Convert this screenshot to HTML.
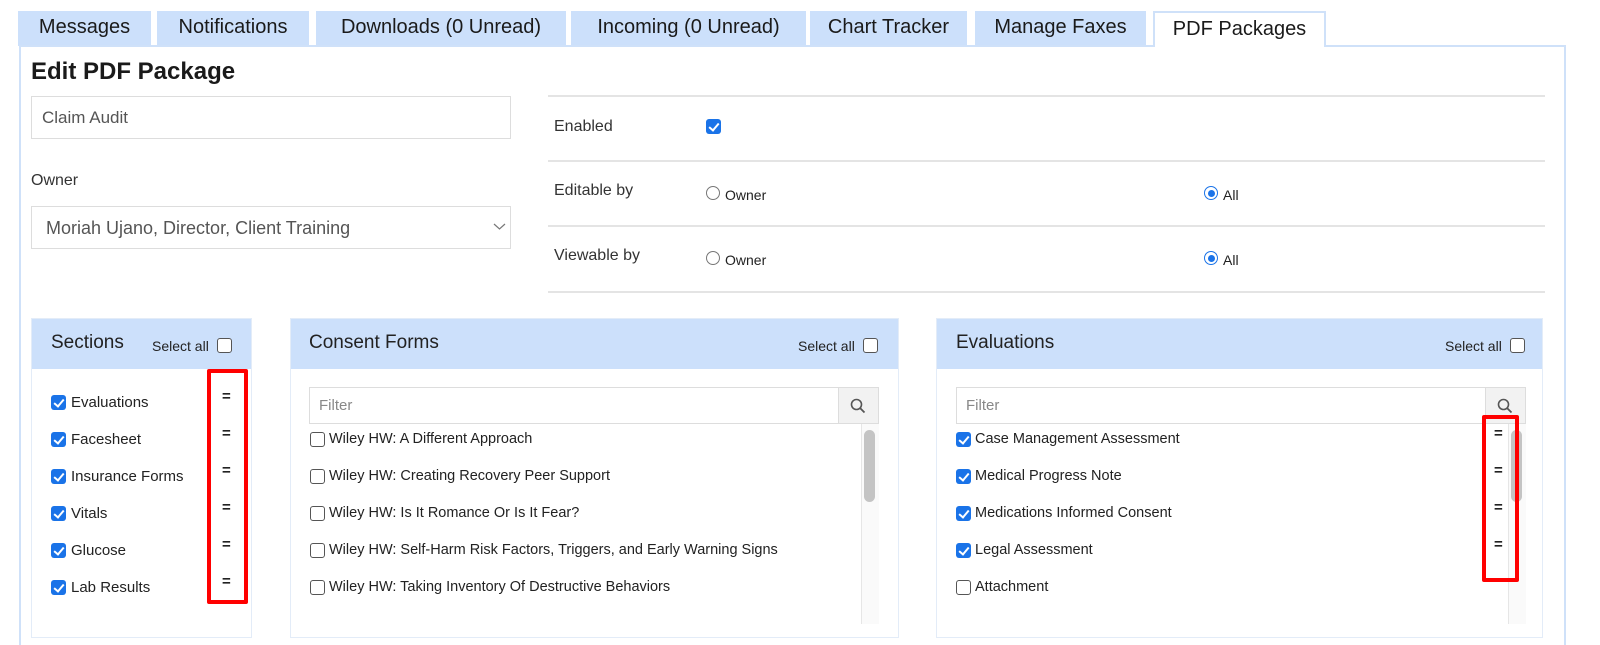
<!DOCTYPE html>
<html><head><style>
*{box-sizing:border-box;margin:0;padding:0}
body{width:1600px;height:623px;overflow:hidden;background:#fff;font-family:"Liberation Sans",Arial,sans-serif;color:#222;position:relative}
.a{position:absolute}
.tab{position:absolute;top:11px;height:35px;background:#cce0fb;font-size:20px;line-height:33px;text-align:center;color:#1a1a1a}
.cb{position:absolute;width:15px;height:15px;border-radius:3px}
.on{background:#1a73e8}
.on:after{content:"";position:absolute;left:5px;top:1.5px;width:4px;height:8px;border:solid #fff;border-width:0 2px 2px 0;transform:rotate(40deg)}
.off{border:1.3px solid #555;background:#fff}
.lbl{position:absolute;font-size:15px;color:#222}
.ph{position:absolute;background:#cce0fb;height:50px}
.pt{position:absolute;font-size:19px;color:#222}
.eq{position:absolute;font-size:15px;font-weight:bold;color:#222}
.radio{position:absolute;width:14px;height:14px;border-radius:50%;border:1px solid #777;background:#fff}
.rsel{border:1px solid #1a73e8}
.rsel:after{content:"";position:absolute;left:2.5px;top:2.5px;width:7px;height:7px;border-radius:50%;background:#1a73e8}
.line{position:absolute;left:548px;width:997px;height:2px;background:#e4e4e4}
</style></head><body>
<div class="tab" style="left:18px;width:133px">Messages</div>
<div class="tab" style="left:157px;width:152px">Notifications</div>
<div class="tab" style="left:316px;width:250px">Downloads (0 Unread)</div>
<div class="tab" style="left:571px;width:235px">Incoming (0 Unread)</div>
<div class="tab" style="left:810px;width:157px">Chart Tracker</div>
<div class="tab" style="left:975px;width:171px">Manage Faxes</div>
<div class="a" style="left:19px;top:45px;width:1547px;height:600px;border:2px solid #cfe1f9;border-bottom:none"></div>
<div class="tab" style="left:1153px;width:173px;background:#fff;border:2px solid #cfe1f9;border-bottom:none;height:36px">PDF Packages</div>

<div class="a" style="left:31px;top:58px;font-size:24px;font-weight:bold;color:#1a1a1a">Edit PDF Package</div>
<div class="a" style="left:31px;top:96px;width:480px;height:43px;border:1px solid #ddd;font-size:17px;color:#555;padding:11px 10px">Claim Audit</div>
<div class="a" style="left:31px;top:172px;font-size:16px;color:#333">Owner</div>
<div class="a" style="left:31px;top:206px;width:480px;height:43px;border:1px solid #ddd;font-size:18px;color:#555;padding:11px 14px">Moriah Ujano, Director, Client Training</div>
<svg class="a" style="left:493px;top:222px" width="13" height="9"><path d="M1 2l5.5 5 5.5-5" fill="none" stroke="#777" stroke-width="1.2"/></svg>

<div class="line" style="top:95px"></div>
<div class="line" style="top:160px"></div>
<div class="line" style="top:225px"></div>
<div class="line" style="top:291px"></div>
<div class="a" style="left:554px;top:118px;font-size:16px;color:#333">Enabled</div>
<div class="cb on" style="left:706px;top:119px"></div>
<div class="a" style="left:554px;top:182px;font-size:16px;color:#333">Editable by</div>
<div class="radio" style="left:706px;top:186px"></div><div class="a" style="left:725px;top:187px;font-size:14px">Owner</div>
<div class="radio rsel" style="left:1204px;top:186px"></div><div class="a" style="left:1223px;top:187px;font-size:14px">All</div>
<div class="a" style="left:554px;top:247px;font-size:16px;color:#333">Viewable by</div>
<div class="radio" style="left:706px;top:251px"></div><div class="a" style="left:725px;top:252px;font-size:14px">Owner</div>
<div class="radio rsel" style="left:1204px;top:251px"></div><div class="a" style="left:1223px;top:252px;font-size:14px">All</div>

<!-- Sections -->
<div class="a" style="left:31px;top:318px;width:221px;height:320px;border:1px solid #e3ecf8"></div>
<div class="ph" style="left:32px;top:319px;width:219px"></div>
<div class="pt" style="left:51px;top:332px">Sections</div>
<div class="lbl" style="left:152px;top:338px;font-size:14px">Select all</div>
<div class="cb off" style="left:217px;top:338px"></div>
<div class="cb on" style="left:51px;top:395px"></div><div class="lbl" style="left:71px;top:394px">Evaluations</div>
<div class="cb on" style="left:51px;top:432px"></div><div class="lbl" style="left:71px;top:431px">Facesheet</div>
<div class="cb on" style="left:51px;top:469px"></div><div class="lbl" style="left:71px;top:468px">Insurance Forms</div>
<div class="cb on" style="left:51px;top:506px"></div><div class="lbl" style="left:71px;top:505px">Vitals</div>
<div class="cb on" style="left:51px;top:543px"></div><div class="lbl" style="left:71px;top:542px">Glucose</div>
<div class="cb on" style="left:51px;top:580px"></div><div class="lbl" style="left:71px;top:579px">Lab Results</div>
<div class="eq" style="left:222px;top:388px">=</div>
<div class="eq" style="left:222px;top:425px">=</div>
<div class="eq" style="left:222px;top:462px">=</div>
<div class="eq" style="left:222px;top:499px">=</div>
<div class="eq" style="left:222px;top:536px">=</div>
<div class="eq" style="left:222px;top:573px">=</div>
<div class="a" style="left:207px;top:369px;width:41px;height:235px;border:4px solid #f00;border-radius:2px"></div>

<!-- Consent -->
<div class="a" style="left:290px;top:318px;width:609px;height:320px;border:1px solid #e3ecf8"></div>
<div class="ph" style="left:291px;top:319px;width:607px"></div>
<div class="pt" style="left:309px;top:332px">Consent Forms</div>
<div class="lbl" style="left:798px;top:338px;font-size:14px">Select all</div>
<div class="cb off" style="left:863px;top:338px"></div>
<div class="a" style="left:309px;top:387px;width:570px;height:37px;border:1px solid #ddd"></div>
<div class="a" style="left:319px;top:397px;font-size:15px;color:#888">Filter</div>
<div class="a" style="left:838px;top:388px;width:40px;height:35px;background:#f2f2f2;border-left:1px solid #ddd"></div>
<svg class="a" style="left:850px;top:398px" width="16" height="16"><circle cx="6.5" cy="6.5" r="5" fill="none" stroke="#555" stroke-width="1.6"/><path d="M10 10l4.5 4.5" stroke="#555" stroke-width="1.8"/></svg>
<div class="a" style="left:861px;top:424px;width:18px;height:200px;border-left:1px solid #e6e6e6;background:#fafafa"></div>
<div class="a" style="left:864px;top:430px;width:11px;height:72px;border-radius:6px;background:#c4c4c4"></div>
<div class="cb off" style="left:310px;top:432px"></div><div class="lbl" style="left:329px;top:431px;font-size:14.5px">Wiley HW: A Different Approach</div>
<div class="cb off" style="left:310px;top:469px"></div><div class="lbl" style="left:329px;top:468px;font-size:14.5px">Wiley HW: Creating Recovery Peer Support</div>
<div class="cb off" style="left:310px;top:506px"></div><div class="lbl" style="left:329px;top:505px;font-size:14.5px">Wiley HW: Is It Romance Or Is It Fear?</div>
<div class="cb off" style="left:310px;top:543px"></div><div class="lbl" style="left:329px;top:542px;font-size:14.5px">Wiley HW: Self-Harm Risk Factors, Triggers, and Early Warning Signs</div>
<div class="cb off" style="left:310px;top:580px"></div><div class="lbl" style="left:329px;top:579px;font-size:14.5px">Wiley HW: Taking Inventory Of Destructive Behaviors</div>

<!-- Evaluations -->
<div class="a" style="left:936px;top:318px;width:607px;height:320px;border:1px solid #e3ecf8"></div>
<div class="ph" style="left:937px;top:319px;width:605px"></div>
<div class="pt" style="left:956px;top:332px">Evaluations</div>
<div class="lbl" style="left:1445px;top:338px;font-size:14px">Select all</div>
<div class="cb off" style="left:1510px;top:338px"></div>
<div class="a" style="left:956px;top:387px;width:570px;height:37px;border:1px solid #ddd"></div>
<div class="a" style="left:966px;top:397px;font-size:15px;color:#888">Filter</div>
<div class="a" style="left:1485px;top:388px;width:40px;height:35px;background:#f2f2f2;border-left:1px solid #ddd"></div>
<svg class="a" style="left:1497px;top:398px" width="16" height="16"><circle cx="6.5" cy="6.5" r="5" fill="none" stroke="#555" stroke-width="1.6"/><path d="M10 10l4.5 4.5" stroke="#555" stroke-width="1.8"/></svg>
<div class="a" style="left:1508px;top:424px;width:18px;height:200px;border-left:1px solid #e6e6e6;background:#fafafa"></div>
<div class="a" style="left:1511px;top:430px;width:11px;height:72px;border-radius:6px;background:#c4c4c4"></div>
<div class="cb on" style="left:956px;top:432px"></div><div class="lbl" style="left:975px;top:431px;font-size:14.5px">Case Management Assessment</div>
<div class="cb on" style="left:956px;top:469px"></div><div class="lbl" style="left:975px;top:468px;font-size:14.5px">Medical Progress Note</div>
<div class="cb on" style="left:956px;top:506px"></div><div class="lbl" style="left:975px;top:505px;font-size:14.5px">Medications Informed Consent</div>
<div class="cb on" style="left:956px;top:543px"></div><div class="lbl" style="left:975px;top:542px;font-size:14.5px">Legal Assessment</div>
<div class="cb off" style="left:956px;top:580px"></div><div class="lbl" style="left:975px;top:579px;font-size:14.5px">Attachment</div>
<div class="eq" style="left:1494px;top:425px">=</div>
<div class="eq" style="left:1494px;top:462px">=</div>
<div class="eq" style="left:1494px;top:499px">=</div>
<div class="eq" style="left:1494px;top:536px">=</div>
<div class="a" style="left:1482px;top:415px;width:37px;height:167px;border:4px solid #f00;border-radius:2px"></div>
</body></html>
